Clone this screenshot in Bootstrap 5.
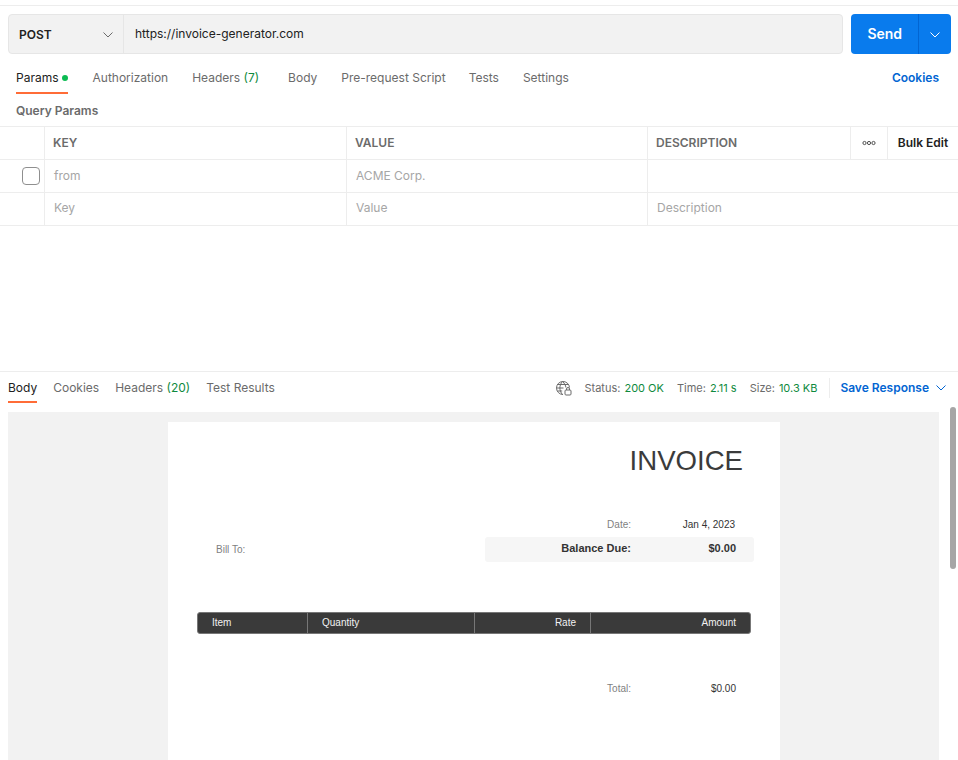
<!doctype html>
<html lang="en"><head><meta charset="utf-8"><title>Postman</title>
<link href="https://cdn.jsdelivr.net/npm/bootstrap@5.3.0/dist/css/bootstrap.min.css" rel="stylesheet">
<style>
html,body{height:760px;overflow:hidden}
body{font-family:Inter,"Liberation Sans",sans-serif;font-size:12px;color:#212121;background:#fff;line-height:16px}
.topline{height:6px;border-bottom:1px solid #ededed}
.reqbar{padding:8px 7px 0 8px;gap:8px}
.urlbox{flex:1;height:40px;background:#f2f2f2;border:1px solid #e6e6e6;border-radius:4px}
.method{width:115px;border-right:1px solid #e6e6e6;padding:2px 10px 0;font-weight:600;color:#212121}
.urltxt{padding-left:11px;color:#212121}
.sendgrp{width:100px;height:40px}
.sendgrp .btn{background:#097bed;border:0;color:#fff;font-size:14px;font-weight:600;line-height:16px;padding:0;border-radius:4px}
.sendgrp .btn:first-child{width:67px;border-top-right-radius:0;border-bottom-right-radius:0}
.sendgrp .btn:last-child{width:33px;margin-left:0;border-left:1px solid #0265d2;border-top-left-radius:0;border-bottom-left-radius:0}
.tabs1{height:38px;padding:0 19px 0 16px;margin-top:1px}
.tabitem{color:#6b6b6b;height:38px;display:flex;align-items:center;padding-top:16px;padding-bottom:9px;position:relative;white-space:nowrap}
.tabitem.on{color:#212121}
.tabitem.on::after{content:"";position:absolute;left:0;right:0;bottom:-1px;height:2px;background:#ff6c37}
.count{color:#0f8a3e}
.dotg{width:6px;height:6px;border-radius:50%;background:#0cbb52;margin-left:3px}
.cookiel{color:#0265d2;font-weight:600}
.bodytab{padding-left:5px}
.authtab{margin-left:25px!important}
.teststab{margin-left:23px!important}
.qp{font-weight:600;color:#6b6b6b;padding:10px 16px 7px;height:33px}
.grow{display:flex;height:33px;border-bottom:1px solid #ededed}
.gtop{height:34px;border-top:1px solid #ededed}
.cell{display:flex;align-items:center;border-right:1px solid #ededed;padding:0 9px;white-space:nowrap}
.c0{width:45px;justify-content:flex-end;padding:0 4px 0 0}.c1{width:302px}.c2{width:301px}.c3{flex:1;border-right:0}
.c3h{width:203px}.c4{width:37px;justify-content:center;padding:0}.c5{flex:1;border-right:0;padding:0;justify-content:center;font-weight:600;color:#212121}
.hd{font-weight:600;color:#6b6b6b;padding-left:8px}
.ph{color:#a6a6a6}
.lastrow .cell{padding-bottom:2px}
.chk{width:18px;height:18px;border:1px solid #8f8f8f;border-radius:4px;background:#fff}
.resp{margin-top:145px;border-top:1px solid #ededed;position:relative}
.tabs2{height:40px;padding:0 12px 0 8px}
.tabs2 .tabitem{height:31px;padding:0;margin-top:0}
.tabs2 .tabitem.on::after{bottom:0}
.meta{color:#6b6b6b;font-size:11px;height:31px}
.metav{color:#0f8a3e;margin-left:4px}
.metagap{margin-left:13px}
.vsep{width:1px;height:20px;background:#ededed;margin:0 10px 0 12px}
.savel{font-size:12px}
.savechev{margin-left:7px}
.panel{background:#f2f2f2;margin:0 19px 0 8px;height:348px;padding-top:10px;display:flex;justify-content:center}
.sheet{width:612px;background:#fff;margin-left:1px;font-family:"Liberation Sans",Arial,sans-serif;color:#333;position:relative}
.invt{font-size:27.6px;line-height:36px;text-align:right;padding:21px 37px 0 0;color:#3b3b3b;height:56px}
.inrow{display:flex;font-size:10px;line-height:12px}
.lbl{color:#7f7f7f}
.datewrap{margin-top:41px;padding-right:45px;justify-content:flex-end}
.datewrap .lbl{width:60px;text-align:right}
.datewrap .vv{width:104px;text-align:right}
.lowrow{display:flex;align-items:center;margin-top:6px}
.billto{width:317px;padding-left:48px;color:#7f7f7f;font-size:10px;line-height:12px;margin-top:1px}
.baldue{width:269px;height:25px;background:#f6f6f6;border-radius:3px;display:flex;align-items:center;justify-content:flex-end;padding:0 18px 4px 0;font-weight:700;font-size:11px}
.baldue span:last-child{width:105px;text-align:right}
.ithead{margin:50px 29px 0;height:22px;width:554px;background:#3a3a3a;border-radius:3px;display:flex;color:#f2f2f2;font-size:10px;line-height:19px;border:1px solid #777}
.ithead>div{border-right:1px solid #777;padding:0 14px}
.i1{width:110px}.i2{width:167px}.i3{width:116px;text-align:right}.i4{flex:1;border-right:0!important;text-align:right}
.totals{margin-top:49px;padding-right:44px;justify-content:flex-end}
.totals .lbl{width:60px;text-align:right}.totals .vv{width:105px;text-align:right}
.scrollb{position:absolute;left:950px;top:35px;width:6px;height:162px;border-radius:3px;background:#a6a6a6}
</style></head>
<body>
<div class="topline"></div>
<div class="d-flex reqbar">
  <div class="urlbox d-flex align-items-center">
    <div class="method d-flex align-items-center justify-content-between h-100"><span>POST</span>
      <svg width="10" height="6" viewBox="0 0 10 6"><path d="M.5.5 5 5 9.500.5" fill="none" stroke="#6b6b6b"/></svg></div>
    <div class="urltxt">https://invoice-generator.com</div>
  </div>
  <div class="btn-group sendgrp"><button class="btn">Send</button><button class="btn"><svg width="10" height="6" viewBox="0 0 10 6"><path d="M.5.5 5 5 9.500.5" fill="none" stroke="#fff"/></svg></button></div>
</div>
<div class="d-flex tabs1 nav align-items-center">
  <div class="tabitem on">Params<span class="dotg"></span></div>
  <div class="tabitem authtab">Authorization</div>
  <div class="tabitem ms-4">Headers&nbsp;<span class="count">(7)</span></div>
  <div class="tabitem ms-4 bodytab">Body</div>
  <div class="tabitem ms-4">Pre-request Script</div>
  <div class="tabitem teststab">Tests</div>
  <div class="tabitem ms-4">Settings</div>
  <div class="tabitem ms-auto cookiel">Cookies</div>
</div>
<div class="qp">Query Params</div>
<div class="grow gtop">
  <div class="cell c0"></div><div class="cell c1 hd">KEY</div><div class="cell c2 hd">VALUE</div><div class="cell c3h hd">DESCRIPTION</div>
  <div class="cell c4"><svg width="14" height="6" viewBox="0 0 14 6" fill="none" stroke="#505050"><circle cx="2.500" cy="3" r="1.600"/><circle cx="7" cy="3" r="1.600"/><circle cx="11.500" cy="3" r="1.600"/></svg></div>
  <div class="cell c5">Bulk Edit</div>
</div>
<div class="grow"><div class="cell c0"><span class="chk"></span></div><div class="cell c1 ph">from</div><div class="cell c2 ph">ACME Corp.</div><div class="cell c3"></div></div>
<div class="grow lastrow"><div class="cell c0"></div><div class="cell c1 ph">Key</div><div class="cell c2 ph">Value</div><div class="cell c3 ph">Description</div></div>
<div class="resp">
  <div class="d-flex tabs2 nav align-items-start">
    <div class="tabitem on">Body</div>
    <div class="tabitem ms-3">Cookies</div>
    <div class="tabitem ms-3">Headers&nbsp;<span class="count">(20)</span></div>
    <div class="tabitem ms-3">Test Results</div>
    <div class="ms-auto d-flex align-items-center meta">
      <svg width="17" height="16" viewBox="0 0 17 16" fill="none" stroke="#6b6b6b" style="margin-right:12px"><path d="M8 14.500a6.500 6.500 0 1 1 6.500-7M1.500 8h7M2.200 4.500h11M2.200 11h5M7.500 1.500c-3.500 3.600-3.500 9.400 0 13M7.500 1.500c2.200 2 3.200 4 3.400 6"/><rect x="10" y="10" width="6" height="5" rx="1" fill="#fff"/><path d="M11.500 10V9a1.500 1.500 0 0 1 3 0v1"/></svg>
      <span>Status:</span><span class="metav">200 OK</span>
      <span class="metagap">Time:</span><span class="metav">2.11 s</span>
      <span class="metagap">Size:</span><span class="metav">10.3 KB</span>
      <span class="vsep"></span>
      <span class="cookiel savel">Save Response</span>
      <svg class="savechev" width="10" height="6" viewBox="0 0 10 6"><path d="M.5.5 5 5 9.500.5" fill="none" stroke="#0265d2"/></svg>
    </div>
  </div>
  <div class="panel">
    <div class="sheet">
      <div class="invt">INVOICE</div>
      <div class="inrow datewrap"><span class="lbl">Date:</span><span class="vv">Jan 4, 2023</span></div>
      <div class="lowrow"><div class="billto">Bill To:</div><div class="baldue"><span>Balance Due:</span><span>$0.00</span></div></div>
      <div class="ithead"><div class="i1">Item</div><div class="i2">Quantity</div><div class="i3">Rate</div><div class="i4">Amount</div></div>
      <div class="inrow totals"><span class="lbl">Total:</span><span class="vv">$0.00</span></div>
    </div>
  </div>
  <div class="scrollb"></div>
</div>
<script src="https://cdn.jsdelivr.net/npm/bootstrap@5.3.0/dist/js/bootstrap.bundle.min.js"></script>
</body></html>
